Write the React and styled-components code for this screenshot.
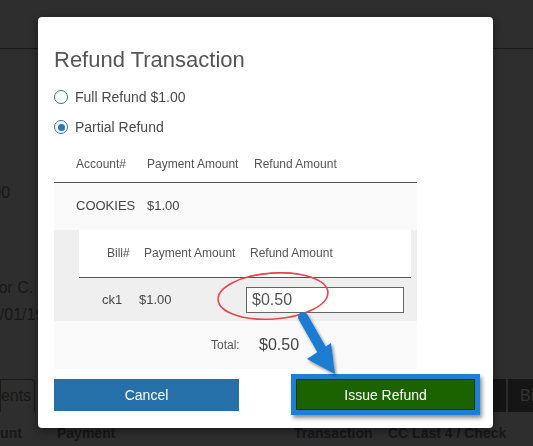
import React from "react";
import styled, { createGlobalStyle } from "styled-components";

const GlobalStyle = createGlobalStyle`
  html, body {
    margin: 0;
    padding: 0;
    overflow: hidden;
  }
  body {
    background: #2e2e2e;
    font-family: "Liberation Sans", Arial, sans-serif;
  }
`;

// dimmed page behind the dialog
const Page = styled.div`
  width: 533px;
  height: 446px;
  overflow: hidden;
  background: #2e2e2e;
  color: #181818;
  display: flex;
  flex-direction: column;
`;
const TopBar = styled.div`
  height: 48px;
  flex-shrink: 0;
  border-bottom: 1px solid #1b1b1b;
`;
const InfoLine = styled.div`
  font-size: 16px;
  line-height: 20px;
  height: 20px;
  white-space: nowrap;
  text-indent: ${(p) => p.$indent}px;
  margin-top: ${(p) => p.$gap}px;
`;
const TabRow = styled.div`
  display: flex;
  height: 33px;
  margin-top: 54px;
  flex-shrink: 0;
`;
const Tab = styled.div`
  width: ${(p) => p.$width}px;
  box-sizing: border-box;
  border: 1px solid #1a1a1a;
  border-bottom: none;
  border-radius: 0 4px 0 0;
  margin-right: 3px;
  font-size: 16px;
  line-height: 32px;
  white-space: nowrap;
  overflow: hidden;
  text-indent: ${(p) => p.$indent || 0}px;
`;
const DarkTabs = styled.div`
  margin-left: auto;
  width: 233px;
  display: flex;
  background: #151515;
`;
const DarkTab = styled.div`
  width: ${(p) => p.$width}px;
  flex-shrink: 0;
  border-left: ${(p) => (p.$divider ? "2px solid #2c2c2c" : "none")};
  padding-left: ${(p) => (p.$divider ? 12 : 0)}px;
  font-size: 16px;
  line-height: 33px;
  color: #343434;
  white-space: nowrap;
`;
const PageHead = styled.div`
  display: grid;
  grid-template-columns: 57px 237px 94px auto;
  margin-top: 12px;
  font-size: 14px;
  font-weight: bold;
  line-height: 18px;
  white-space: nowrap;
`;
const HeadCell = styled.div`
  text-indent: ${(p) => p.$indent || 0}px;
  overflow: hidden;
`;

// dialog
const Modal = styled.div`
  position: fixed;
  left: 38px;
  top: 17px;
  width: 455px;
  box-sizing: border-box;
  padding: 30px 13px 13px 16px;
  background: #fff;
  border-radius: 4px;
  box-shadow: 0 3px 10px rgba(0, 0, 0, 0.45);
`;
const Title = styled.h2`
  margin: 0 0 9px;
  font-size: 22px;
  line-height: 26px;
  font-weight: normal;
  color: #555;
`;
const RadioRow = styled.label`
  display: flex;
  align-items: center;
  height: 30px;
  gap: 7px;
  font-size: 14px;
  color: #4a4a4a;
`;
const RadioCircle = styled.span`
  width: 14px;
  height: 14px;
  box-sizing: border-box;
  border-radius: 50%;
  border: 1.5px solid #2a74ba;
  display: flex;
  align-items: center;
  justify-content: center;
  &::after {
    content: "";
    width: 7px;
    height: 7px;
    border-radius: 50%;
    background: ${(p) => (p.$checked ? "#2a74ba" : "transparent")};
  }
`;
const Table = styled.div`
  width: 363px;
`;
const Row = styled.div`
  display: grid;
  grid-template-columns: ${(p) => p.$cols};
  align-items: center;
  padding: ${(p) => p.$pad};
  height: ${(p) => p.$height || "auto"};
  line-height: 16px;
  font-size: ${(p) => (p.$head ? 12 : 13)}px;
  color: ${(p) => (p.$head ? "#555" : "#454545")};
  background: ${(p) => p.$bg || "transparent"};
  border-bottom: ${(p) => (p.$line ? "1px solid #555" : "none")};
  box-sizing: ${(p) => (p.$height ? "border-box" : "content-box")};
  white-space: nowrap;
`;
const Nested = styled.div`
  background: #efefef;
  padding: 0 6px 0 25px;
`;
const AmountInput = styled.input`
  width: 158px;
  height: 26px;
  box-sizing: border-box;
  border: 1px solid #666;
  padding: 0 5px;
  font-family: "Liberation Sans", Arial, sans-serif;
  font-size: 16px;
  color: #555;
  background: #fff;
  outline: none;
`;
const TotalLabel = styled.span`
  font-size: 12px;
  color: #555;
`;
const TotalValue = styled.span`
  font-size: 16px;
  color: #454545;
`;
const Footer = styled.div`
  display: flex;
  align-items: center;
  justify-content: space-between;
  margin-top: 5px;
`;
const Button = styled.button`
  width: ${(p) => p.$width}px;
  height: ${(p) => p.$height}px;
  box-sizing: border-box;
  border: ${(p) => (p.$green ? "1px solid #0e3500" : "none")};
  background: ${(p) => (p.$green ? "#1b6300" : "#2670aa")};
  color: #fff;
  font-family: "Liberation Sans", Arial, sans-serif;
  font-size: 14px;
  cursor: pointer;
  padding: 0;
`;
const Highlight = styled.div`
  display: flex;
  border: 5px solid #1d7fd5;
  box-shadow: 2px 3px 4px rgba(0, 0, 0, 0.45);
`;
const Annotations = styled.svg`
  position: absolute;
  left: 0;
  top: 0;
  width: 100%;
  height: 100%;
  pointer-events: none;
  overflow: visible;
`;

export default function App() {
  return (
    <>
      <GlobalStyle />
      <Page>
        <TopBar />
        <InfoLine $gap={134} $indent={-30}>$1.00</InfoLine>
        <InfoLine $gap={75} $indent={-30}>Taylor C. Tho</InfoLine>
        <InfoLine $gap={7} $indent={-18}>01/01/1900</InfoLine>
        <TabRow>
          <Tab $width={35} $indent={-41}>Payments</Tab>
          <Tab $width={120}>Bills</Tab>
          <DarkTabs>
            <DarkTab $width={206} />
            <DarkTab $width={27} $divider>Bills</DarkTab>
          </DarkTabs>
        </TabRow>
        <PageHead>
          <HeadCell $indent={-31}>Amount</HeadCell>
          <HeadCell>Payment</HeadCell>
          <HeadCell>Transaction</HeadCell>
          <HeadCell>CC Last 4 / Check</HeadCell>
        </PageHead>
      </Page>

      <Modal>
        <Title>Refund Transaction</Title>
        <RadioRow>
          <RadioCircle />
          Full Refund $1.00
        </RadioRow>
        <RadioRow>
          <RadioCircle $checked />
          Partial Refund
        </RadioRow>

        <Table>
          <Row $head $line $cols="71px 107px auto" $pad="14px 0 10px 22px">
            <span>Account#</span>
            <span>Payment Amount</span>
            <span>Refund Amount</span>
          </Row>
          <Row $cols="71px 107px auto" $pad="15px 0 16px 22px" $bg="#f9f9f9">
            <span>COOKIES</span>
            <span>$1.00</span>
            <span />
          </Row>
          <Nested>
            <Row $head $line $cols="37px 106px auto" $pad="15px 0 16px 28px" $bg="#fff">
              <span>Bill#</span>
              <span>Payment Amount</span>
              <span>Refund Amount</span>
            </Row>
            <Row $cols="37px 107px auto" $pad="0 0 0 23px" $height="43px">
              <span>ck1</span>
              <span>$1.00</span>
              <AmountInput defaultValue="$0.50" />
            </Row>
          </Nested>
          <Row $cols="48px auto" $pad="0 0 0 157px" $height="48px" $bg="#f9f9f9">
            <TotalLabel>Total:</TotalLabel>
            <TotalValue>$0.50</TotalValue>
          </Row>
        </Table>

        <Footer>
          <Button $width={185} $height={32}>Cancel</Button>
          <Highlight>
            <Button $green $width={179} $height={31}>Issue Refund</Button>
          </Highlight>
        </Footer>

        <Annotations>
          <defs>
            <filter id="shade" x="-30%" y="-30%" width="160%" height="160%">
              <feDropShadow dx="1.5" dy="2" stdDeviation="1.5" floodColor="#000" floodOpacity="0.45" />
            </filter>
          </defs>
          <g transform="rotate(-4 235 279)">
            <ellipse cx="235" cy="279" rx="55" ry="23" fill="none" stroke="#e8474c" strokeWidth="1.6" />
            <path d="M 212 258 Q 240 254 262 259" fill="none" stroke="#e8474c" strokeWidth="1.4" />
          </g>
          <g filter="url(#shade)" fill="#1a7bd2">
            <line x1="265" y1="300" x2="285" y2="335" stroke="#1a7bd2" strokeWidth="10" strokeLinecap="round" />
            <polygon points="269,342 293,326 297,357" />
          </g>
        </Annotations>
      </Modal>
    </>
  );
}
